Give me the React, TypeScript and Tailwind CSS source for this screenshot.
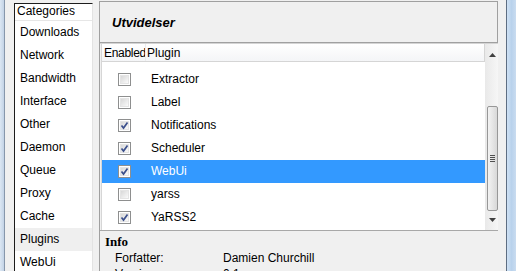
import React from 'react';

const categories = ['Downloads', 'Network', 'Bandwidth', 'Interface', 'Other', 'Daemon', 'Queue', 'Proxy', 'Cache', 'Plugins', 'WebUi'];

const plugins = [
  { name: 'Extractor', enabled: false },
  { name: 'Label', enabled: false },
  { name: 'Notifications', enabled: true },
  { name: 'Scheduler', enabled: true },
  { name: 'WebUi', enabled: true, selected: true },
  { name: 'yarss', enabled: false },
  { name: 'YaRSS2', enabled: true },
];

const Checkbox: React.FC<{ checked: boolean }> = ({ checked }) => (
  <div className="relative w-[13px] h-[13px] border border-[#8e8f8f] bg-white p-px">
    <div className="w-full h-full border border-[#e4e4e4] bg-gradient-to-br from-[#d8d8d8] to-[#fafafa]" />
    {checked && (
      <svg className="absolute left-0 top-0" width="11" height="11" viewBox="0 0 11 11">
        <path d="M2.5 5.5 L4.5 8 L8.5 2.5" fill="none" stroke="#3b4f8c" strokeWidth="1.7" />
      </svg>
    )}
  </div>
);

const App: React.FC = () => {
  return (
    <div className="w-[516px] h-[271px] overflow-hidden flex bg-[#f0f0f0] font-['Liberation_Sans',Arial,sans-serif] text-[12px] leading-[15px] text-black">
      {/* left window frame */}
      <div className="w-[4px] shrink-0 bg-gradient-to-r from-[#dce7f3] to-[#c3d3e6]" />
      <div className="w-px shrink-0 bg-[#8797ab]" />
      <div className="w-[9px] shrink-0" />

      {/* Categories list */}
      <div className="mt-[3px] w-[79px] h-[290px] shrink-0 self-start bg-white border-l border-t border-[#1c1c1c] border-r border-r-[#e3e3e3]">
        <div className="h-[17px] border-b border-[#e6e6e6] pl-[2px]">Categories</div>
        {categories.map((c) => (
          <div key={c} className={`h-[23px] flex items-center pl-[5px] ${c === 'Plugins' ? 'bg-[#efefef]' : ''}`}>
            {c}
          </div>
        ))}
      </div>

      <div className="w-[6px] shrink-0" />

      {/* Right panel */}
      <div className="mt-px w-[399px] shrink-0 flex flex-col border-l border-t border-[#a0a0a0]">
        <div className="h-[41px] shrink-0 flex items-center pl-[12px] border-b border-r border-[#a0a0a0] font-bold italic text-[13px]">
          Utvidelser
        </div>
        <div className="h-px shrink-0 bg-[#d4d4d4]" />

        <div className="h-[187px] shrink-0 flex pl-px border-b border-[#a8a8a8]">
          <div className="flex-1 flex flex-col bg-white border-l border-[#d6d6d6] overflow-hidden">
            <div className="h-[18px] shrink-0 flex border-b border-r border-[#d5d5d5] bg-gradient-to-b from-white to-[#f4f5f7]">
              <div className="w-[44px] pl-[2px] pt-[2px] border-r border-[#ececec] tracking-[-0.3px] whitespace-nowrap overflow-hidden">Enabled</div>
              <div className="pl-[1px] pt-[2px]">Plugin</div>
            </div>
            <div className="h-[6px] shrink-0" />
            {plugins.map((p) => (
              <div
                key={p.name}
                className={`h-[23px] shrink-0 flex items-center pl-[16px] ${p.selected ? 'bg-[#3399ff] text-white' : ''}`}
              >
                <Checkbox checked={p.enabled} />
                <span className="ml-[20px]">{p.name}</span>
              </div>
            ))}
          </div>

          {/* scrollbar */}
          <div className="w-[13px] shrink-0 flex flex-col bg-gradient-to-r from-[#e9e9e9] to-[#f6f6f6]">
            <div className="h-[9px]" />
            <svg className="ml-[4px]" width="7" height="4" viewBox="0 0 7 4">
              <path d="M0 4 L3.5 0 L7 4 Z" fill="#404040" />
            </svg>
            <div className="h-[49px]" />
            <div className="ml-[2px] h-[105px] flex items-center justify-center rounded-[2px] border border-[#979797] bg-gradient-to-r from-[#f3f3f3] to-[#d8d8d8]">
              <div className="flex flex-col gap-px">
                <div className="w-[5px] h-px bg-[#4f4f4f]" />
                <div className="w-[5px] h-px bg-[#4f4f4f]" />
                <div className="w-[5px] h-px bg-[#4f4f4f]" />
                <div className="w-[5px] h-px bg-[#4f4f4f]" />
              </div>
            </div>
            <div className="h-[7px]" />
            <svg className="ml-[4px]" width="7" height="4" viewBox="0 0 7 4">
              <path d="M0 0 L7 0 L3.5 4 Z" fill="#404040" />
            </svg>
          </div>
        </div>

        {/* Info */}
        <div className="flex-1 pt-[3px] pl-[5px]">
          <div className="h-[16px] font-['Liberation_Serif',serif] font-bold text-[13px] leading-[16px]">Info</div>
          <div className="flex h-[16px] items-center pl-[10px]">
            <span className="w-[108px]">Forfatter:</span>
            <span>Damien Churchill</span>
          </div>
          <div className="flex h-[16px] items-center pl-[10px]">
            <span className="w-[108px]">Versjon:</span>
            <span>0.1</span>
          </div>
        </div>
      </div>

      {/* right window frame */}
      <div className="w-[8px] shrink-0" />
      <div className="w-px shrink-0 bg-[#5d6d82]" />
      <div className="flex-1 bg-gradient-to-r from-[#cfe1f4] via-[#b9d2ec] to-[#c9dcf0]" />
    </div>
  );
};

export default App;
